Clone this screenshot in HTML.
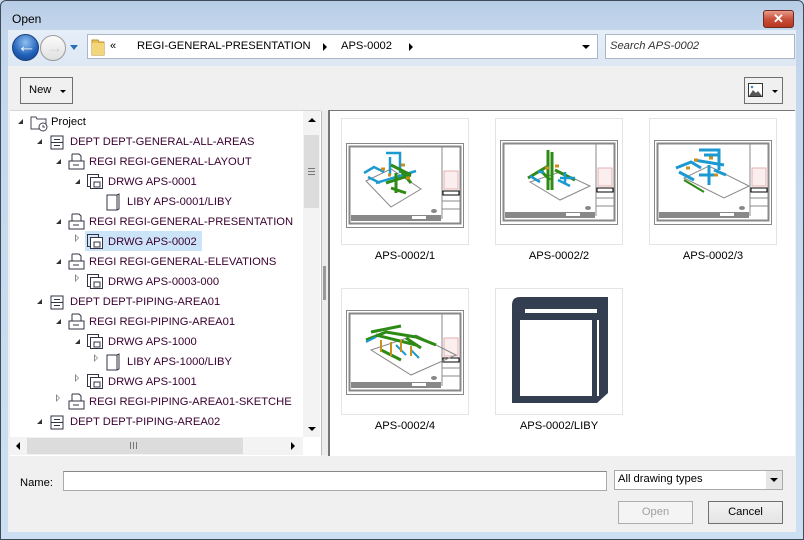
<!DOCTYPE html>
<html><head><style>
*{box-sizing:border-box;margin:0;padding:0}
body{width:804px;height:540px;overflow:hidden;background:#c9dbef;font-family:"Liberation Sans",sans-serif;font-size:11px;color:#000;position:relative}
.a{position:absolute}
#frame{left:0;top:0;width:804px;height:540px;border:1px solid #3f4a57;border-radius:6px 6px 0 0;background:linear-gradient(#b7cde6,#c4d6ec 30px,#cddff2)}
#nav{left:8px;top:30px;width:788px;height:36px;background:linear-gradient(#e6eef8,#dde8f4)}
#client{left:8px;top:66px;width:788px;height:466px;background:#f0f0f0}
.tr{position:absolute;height:18px;line-height:18px;white-space:nowrap;font-size:11.2px;color:#3a0030}
.ex{position:absolute;width:0;height:0;border-left:5px solid transparent;border-bottom:5px solid #333;top:7px}
.co{position:absolute;width:0;height:0;border-top:4px solid transparent;border-bottom:4px solid transparent;border-left:4px solid #888;top:5px}
.co:after{content:"";position:absolute;left:-3px;top:-2px;border-top:2px solid transparent;border-bottom:2px solid transparent;border-left:2px solid #fff}
.thumb{position:absolute;width:128px;height:127px;border:1px solid #e4e4e4;background:#fff}
.lbl{position:absolute;width:128px;text-align:center;font-size:11.2px;color:#000}
.btn{position:absolute;border:1px solid #707070;background:linear-gradient(#f2f2f2,#e4e4e4);text-align:center;font-size:11.2px}
</style></head><body>
<div class="a" id="frame"></div>
<div class="a" style="left:12px;top:12px;font-size:12px;color:#000">Open</div>
<div class="a" style="left:763px;top:10px;width:31px;height:18px;border:1px solid #6b2a22;border-radius:3px;background:linear-gradient(#e99a8a,#c9503b 50%,#b8371f);color:#fff;font-weight:bold;font-size:13px;text-align:center;line-height:16px">✕</div>
<div class="a" id="nav"></div>
<div class="a" style="left:12px;top:34px;width:27px;height:27px;border-radius:50%;background:radial-gradient(circle at 50% 30%,#8fc0f0,#1f5fb8 60%,#123f88);border:1px solid #1b3f78"></div>
<div class="a" style="left:17px;top:36px;color:#fff;font-size:19px;font-weight:bold;line-height:22px">←</div>
<div class="a" style="left:40px;top:35px;width:26px;height:26px;border-radius:50%;background:linear-gradient(#fbfbfb,#e0e0e0);border:1px solid #9a9a9a"></div>
<div class="a" style="left:46px;top:37px;color:#d0d0d0;font-size:17px;line-height:22px">→</div>
<div class="a" style="left:70px;top:45px;border-left:4px solid transparent;border-right:4px solid transparent;border-top:5px solid #2a6fb8"></div>
<div class="a" style="left:87px;top:34px;width:511px;height:25px;background:#fff;border:1px solid #aab7c7"></div>
<svg class="a" style="left:91px;top:38px" width="14" height="18"><path d="M1 2h6l1 2h5v13H1z" fill="#e8c25a" stroke="#b8902c"/><rect x="1" y="5" width="12" height="12" fill="#f3d67a"/></svg>
<div class="a" style="left:110px;top:40px;font-size:11px">«</div>
<div class="a" style="left:137px;top:40px;font-size:11.2px">REGI-GENERAL-PRESENTATION</div>
<div class="a" style="left:323px;top:43px;border-top:4px solid transparent;border-bottom:4px solid transparent;border-left:4px solid #000"></div>
<div class="a" style="left:341px;top:40px;font-size:11.2px">APS-0002</div>
<div class="a" style="left:409px;top:43px;border-top:4px solid transparent;border-bottom:4px solid transparent;border-left:4px solid #000"></div>
<div class="a" style="left:582px;top:45px;border-left:4px solid transparent;border-right:4px solid transparent;border-top:4px solid #000"></div>
<div class="a" style="left:605px;top:34px;width:190px;height:25px;background:#fff;border:1px solid #aab7c7"></div>
<div class="a" style="left:610px;top:40px;font-style:italic;color:#333;font-size:11.2px">Search APS-0002</div>
<div class="a" id="client"></div>
<div class="a" style="left:20px;top:77px;width:53px;height:27px;border:1px solid #707070;background:#f0f0f0"></div>
<div class="a" style="left:29px;top:84px;font-size:11.2px">New</div>
<div class="a" style="left:60px;top:90px;border-left:3px solid transparent;border-right:3px solid transparent;border-top:3px solid #000"></div>
<div class="a" style="left:744px;top:77px;width:39px;height:27px;border:1px solid #707070;background:#f0f0f0"></div>
<div class="a" style="left:748px;top:83px;width:15px;height:14px;border:1px solid #333;background:#fff"></div>
<svg class="a" style="left:749px;top:84px" width="13" height="12"><path d="M0 12 L4 6 L7 9 L9 7 L13 12z" fill="#555"/><circle cx="3" cy="3" r="1.3" fill="#4a8ad0"/></svg>
<div class="a" style="left:772px;top:90px;border-left:3px solid transparent;border-right:3px solid transparent;border-top:3px solid #000"></div>
<div class="a" style="left:10px;top:110px;width:311px;height:346px;background:#fff;border-top:1px solid #d5d5d5"></div>
<div class="a" style="left:303px;top:111px;width:17px;height:326px;background:#f3f3f3"></div>
<div class="a" style="left:304px;top:135px;width:15px;height:73px;background:#dcdcdc"></div>
<div class="a" style="left:308px;top:168px;width:7px;height:7px;border-top:1px solid #777;border-bottom:1px solid #777"><div style="margin-top:2px;border-top:1px solid #777"></div></div>
<div class="a" style="left:308px;top:118px;border-left:4px solid transparent;border-right:4px solid transparent;border-bottom:4px solid #000"></div>
<div class="a" style="left:308px;top:427px;border-left:4px solid transparent;border-right:4px solid transparent;border-top:4px solid #000"></div>
<div class="a" style="left:10px;top:437px;width:293px;height:18px;background:#f3f3f3"></div>
<div class="a" style="left:27px;top:438px;width:216px;height:16px;background:#dcdcdc"></div>
<div class="a" style="left:130px;top:442px;width:7px;height:7px;border-left:1px solid #777;border-right:1px solid #777"><div style="margin-left:2px;width:1px;height:7px;border-left:1px solid #777"></div></div>
<div class="a" style="left:16px;top:442px;border-top:4px solid transparent;border-bottom:4px solid transparent;border-right:4px solid #000"></div>
<div class="a" style="left:291px;top:442px;border-top:4px solid transparent;border-bottom:4px solid transparent;border-left:4px solid #000"></div>
<div class="a" style="left:321px;top:111px;width:7px;height:344px;background:#ececec;border-left:1px solid #bbb"></div>
<div class="a" style="left:323px;top:266px;width:3px;height:34px;background:#999"></div>
<div class="a" style="left:85px;top:231px;width:117px;height:20px;background:#cce4f7"></div>

<div class="ex" style="left:18px;top:119px"></div>
<svg class="a" style="left:30px;top:114px" width="18" height="18"><path d="M1 3h5l1 2h9v10H1z" fill="none" stroke="#445"/><circle cx="13" cy="13" r="4" fill="#fff" stroke="#445"/><path d="M13 11v2h2" stroke="#445" fill="none"/></svg>
<div class="tr" style="left:51px;top:113px;color:#000">Project</div>

<div class="ex" style="left:37px;top:139px"></div>
<svg class="a" style="left:50px;top:135px" width="15" height="15"><rect x="1" y="1" width="12" height="13" fill="none" stroke="#334"/><path d="M1 7.5h12M4 4.5h6M4 10.5h6" stroke="#334"/></svg>
<div class="tr" style="left:70px;top:133px">DEPT DEPT-GENERAL-ALL-AREAS</div>

<div class="ex" style="left:56px;top:159px"></div>
<svg class="a" style="left:68px;top:153px" width="17" height="17"><path d="M4 1h7l2 2v5M4 1v7M1 8h15v8H1z M5 12h6" fill="none" stroke="#334"/></svg>
<div class="tr" style="left:89px;top:153px">REGI REGI-GENERAL-LAYOUT</div>

<div class="ex" style="left:75px;top:179px"></div>
<svg class="a" style="left:87px;top:174px" width="17" height="16"><rect x="0.5" y="0.5" width="11" height="12" fill="none" stroke="#334"/><rect x="3.5" y="3.5" width="12" height="11" fill="#fff" stroke="#334"/><rect x="7" y="8" width="6" height="5" fill="none" stroke="#334"/></svg>
<div class="tr" style="left:108px;top:173px">DRWG APS-0001</div>

<svg class="a" style="left:106px;top:193px" width="14" height="18"><path d="M1 2h10v15H1z M11 2l2-1v15l-2 1" fill="none" stroke="#334"/></svg>
<div class="tr" style="left:127px;top:193px">LIBY APS-0001/LIBY</div>

<div class="ex" style="left:56px;top:219px"></div>
<svg class="a" style="left:68px;top:213px" width="17" height="17"><path d="M4 1h7l2 2v5M4 1v7M1 8h15v8H1z M5 12h6" fill="none" stroke="#334"/></svg>
<div class="tr" style="left:89px;top:213px">REGI REGI-GENERAL-PRESENTATION</div>

<div class="co" style="left:75px;top:234px"></div>
<svg class="a" style="left:87px;top:234px" width="17" height="16"><rect x="0.5" y="0.5" width="11" height="12" fill="none" stroke="#334"/><rect x="3.5" y="3.5" width="12" height="11" fill="#fff" stroke="#334"/><rect x="7" y="8" width="6" height="5" fill="none" stroke="#334"/></svg>
<div class="tr" style="left:108px;top:233px">DRWG APS-0002</div>

<div class="ex" style="left:56px;top:259px"></div>
<svg class="a" style="left:68px;top:253px" width="17" height="17"><path d="M4 1h7l2 2v5M4 1v7M1 8h15v8H1z M5 12h6" fill="none" stroke="#334"/></svg>
<div class="tr" style="left:89px;top:253px">REGI REGI-GENERAL-ELEVATIONS</div>

<div class="co" style="left:75px;top:274px"></div>
<svg class="a" style="left:87px;top:274px" width="17" height="16"><rect x="0.5" y="0.5" width="11" height="12" fill="none" stroke="#334"/><rect x="3.5" y="3.5" width="12" height="11" fill="#fff" stroke="#334"/><rect x="7" y="8" width="6" height="5" fill="none" stroke="#334"/></svg>
<div class="tr" style="left:108px;top:273px">DRWG APS-0003-000</div>

<div class="ex" style="left:37px;top:299px"></div>
<svg class="a" style="left:50px;top:295px" width="15" height="15"><rect x="1" y="1" width="12" height="13" fill="none" stroke="#334"/><path d="M1 7.5h12M4 4.5h6M4 10.5h6" stroke="#334"/></svg>
<div class="tr" style="left:70px;top:293px">DEPT DEPT-PIPING-AREA01</div>

<div class="ex" style="left:56px;top:319px"></div>
<svg class="a" style="left:68px;top:313px" width="17" height="17"><path d="M4 1h7l2 2v5M4 1v7M1 8h15v8H1z M5 12h6" fill="none" stroke="#334"/></svg>
<div class="tr" style="left:89px;top:313px">REGI REGI-PIPING-AREA01</div>

<div class="ex" style="left:75px;top:339px"></div>
<svg class="a" style="left:87px;top:334px" width="17" height="16"><rect x="0.5" y="0.5" width="11" height="12" fill="none" stroke="#334"/><rect x="3.5" y="3.5" width="12" height="11" fill="#fff" stroke="#334"/><rect x="7" y="8" width="6" height="5" fill="none" stroke="#334"/></svg>
<div class="tr" style="left:108px;top:333px">DRWG APS-1000</div>

<div class="co" style="left:94px;top:354px"></div>
<svg class="a" style="left:106px;top:353px" width="14" height="18"><path d="M1 2h10v15H1z M11 2l2-1v15l-2 1" fill="none" stroke="#334"/></svg>
<div class="tr" style="left:127px;top:353px">LIBY APS-1000/LIBY</div>

<div class="co" style="left:75px;top:374px"></div>
<svg class="a" style="left:87px;top:374px" width="17" height="16"><rect x="0.5" y="0.5" width="11" height="12" fill="none" stroke="#334"/><rect x="3.5" y="3.5" width="12" height="11" fill="#fff" stroke="#334"/><rect x="7" y="8" width="6" height="5" fill="none" stroke="#334"/></svg>
<div class="tr" style="left:108px;top:373px">DRWG APS-1001</div>

<div class="co" style="left:56px;top:394px"></div>
<svg class="a" style="left:68px;top:393px" width="17" height="17"><path d="M4 1h7l2 2v5M4 1v7M1 8h15v8H1z M5 12h6" fill="none" stroke="#334"/></svg>
<div class="tr" style="left:89px;top:393px">REGI REGI-PIPING-AREA01-SKETCHE</div>

<div class="ex" style="left:37px;top:419px"></div>
<svg class="a" style="left:50px;top:415px" width="15" height="15"><rect x="1" y="1" width="12" height="13" fill="none" stroke="#334"/><path d="M1 7.5h12M4 4.5h6M4 10.5h6" stroke="#334"/></svg>
<div class="tr" style="left:70px;top:413px">DEPT DEPT-PIPING-AREA02</div>
<div class="a" style="left:10px;top:432px;width:293px;height:5px;overflow:hidden"><div style="position:absolute;left:79px;top:-11px;font-size:11.2px;color:#3a0030;white-space:nowrap">REGI REGI-PIPING-AREA02-SUPPORT</div></div>

<div class="a" style="left:328px;top:110px;width:467px;height:346px;background:#fff;border-left:2px solid #777;border-top:1px solid #777"></div>

<svg width="0" height="0" style="position:absolute"><defs>
<g id="dw">
<rect x="0.5" y="0.5" width="117" height="84" fill="#fff" stroke="#888"/>
<rect x="3.5" y="3.5" width="111" height="77" fill="none" stroke="#888" stroke-width="2"/>
<path d="M96 4v72M96 58h18M96 66h18" stroke="#888"/>
<rect x="98" y="28" width="14" height="18" fill="#fbeeee" stroke="#e4b0b0"/>
<rect x="97" y="48" width="16" height="4" fill="#fff" stroke="#000"/>
<rect x="5" y="72" width="90" height="6" fill="#888"/>
<rect x="66" y="73" width="14" height="3" fill="#fff"/>
<ellipse cx="88" cy="68" rx="3" ry="2" fill="#888"/>
</g></defs></svg>

<div class="thumb" style="left:341px;top:118px"></div>
<svg class="a" style="left:346px;top:143px" width="118" height="85"><use href="#dw"/>
<path d="M20 38l25-12 30 20-30 18z" fill="none" stroke="#888"/>
<path d="M18 30l10-6 10 5M40 10h14v20M44 14v18M30 40l40-12M22 34l12 6" stroke="#1a9ad0" stroke-width="2.5" fill="none"/>
<path d="M45 22l20 10M50 30v20M55 28l10 12M40 40l25-8M45 45l15 5" stroke="#2d8a15" stroke-width="3" fill="none"/>
<path d="M35 26h4M55 22h4M60 35h4M42 32h3" stroke="#c8901a" stroke-width="3"/></svg>
<div class="lbl" style="left:341px;top:250px">APS-0002/1</div>

<div class="thumb" style="left:495px;top:118px"></div>
<svg class="a" style="left:500px;top:140px" width="118" height="85"><use href="#dw"/>
<path d="M30 42l30 18 30-14-30-14z" fill="none" stroke="#888"/>
<path d="M48 10v40M52 12v38M28 38l20-12M55 30l20 10M40 30l10 10" stroke="#2d8a15" stroke-width="3" fill="none"/>
<path d="M30 36l10 6M60 38l15 0M65 32v12M38 32h6M58 40l12 6" stroke="#1a9ad0" stroke-width="2.5" fill="none"/>
<path d="M45 28h4M55 26h4" stroke="#c8901a" stroke-width="3"/></svg>
<div class="lbl" style="left:495px;top:250px">APS-0002/2</div>

<div class="thumb" style="left:649px;top:118px"></div>
<svg class="a" style="left:654px;top:140px" width="118" height="85"><use href="#dw"/>
<path d="M30 38l40 20 25-12-40-20z" fill="none" stroke="#888"/>
<path d="M22 28l15-6 10 6M45 10h20v20M40 20l30 5M55 25v20M60 30l12 5M45 35h15M25 32l15 8M50 15h15" stroke="#1a9ad0" stroke-width="3" fill="none"/>
<path d="M40 20h4M55 18h4M60 35h4M32 28h4" stroke="#c8901a" stroke-width="3"/>
<path d="M30 40l20 12" stroke="#2d8a15" stroke-width="2"/></svg>
<div class="lbl" style="left:649px;top:250px">APS-0002/3</div>

<div class="thumb" style="left:341px;top:288px"></div>
<svg class="a" style="left:346px;top:310px" width="118" height="85"><use href="#dw"/>
<path d="M25 40l40 25 45-20-40-20z" fill="none" stroke="#888"/>
<path d="M20 30l20-8 30 5 20 8M25 22l30 -6M35 40l20 10M60 28l15 10M30 25l40 10" stroke="#2d8a15" stroke-width="3" fill="none"/>
<path d="M20 32l10-5M50 35l10 10M65 40l8 8" stroke="#1a9ad0" stroke-width="2" fill="none"/>
<path d="M35 30v12M45 32v14M55 30v12M65 36v10" stroke="#c8901a" stroke-width="2"/></svg>
<div class="lbl" style="left:341px;top:420px">APS-0002/4</div>

<div class="thumb" style="left:495px;top:288px"></div>
<svg class="a" style="left:505px;top:292px" width="106" height="122"><path d="M15 5 H103 V101 L92 111 H7 V13 Q7 5 15 5z" fill="#333f50"/><rect x="20" y="17" width="72" height="4" fill="#fff"/><rect x="15" y="28" width="72" height="76" fill="#fff"/><path d="M93 28 V104" stroke="#fff" stroke-width="2"/></svg>
<div class="lbl" style="left:495px;top:420px">APS-0002/LIBY</div>

<div class="a" style="left:20px;top:477px;font-size:11.2px">Name:</div>
<div class="a" style="left:63px;top:471px;width:544px;height:20px;background:#fff;border:1px solid #aaa;border-top-color:#888"></div>
<div class="a" style="left:614px;top:470px;width:169px;height:20px;background:#fff;border:1px solid #aaa"></div>
<div class="a" style="left:618px;top:473px;font-size:11.2px">All drawing types</div>
<div class="a" style="left:766px;top:471px;width:16px;height:18px;background:#e6e6e6"></div>
<div class="a" style="left:770px;top:478px;border-left:4px solid transparent;border-right:4px solid transparent;border-top:4px solid #000"></div>
<div class="btn" style="left:618px;top:501px;width:75px;height:23px;line-height:21px;color:#a0a0a0;border-color:#adadad;background:#f4f4f4">Open</div>
<div class="btn" style="left:708px;top:501px;width:75px;height:23px;line-height:21px">Cancel</div>
</body></html>
